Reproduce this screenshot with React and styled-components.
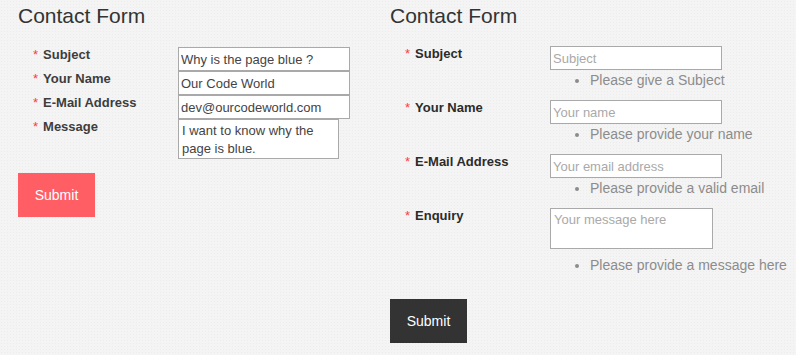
import React from "react";
import styled, { createGlobalStyle } from "styled-components";

const Global = createGlobalStyle`
  html, body { margin: 0; padding: 0; }
  body {
    background-color: #f4f4f4;
    background-image: radial-gradient(#ececec 0.8px, transparent 0.9px);
    background-size: 3px 3px;
    font-family: Arial, "Liberation Sans", sans-serif;
    color: #333;
  }
`;

const Page = styled.div`
  display: flex;
  align-items: flex-start;
  width: 796px;
  height: 355px;
  overflow: hidden;
`;

const Section = styled.section`
  box-sizing: border-box;
  width: ${(p) => p.$width || "auto"};
  flex: ${(p) => (p.$width ? "none" : "1")};
  padding-left: ${(p) => (p.$flush ? 0 : 18)}px;
`;

const Title = styled.h2`
  margin: 4px 0 0;
  font-size: 21px;
  line-height: 24px;
  font-weight: normal;
  color: #333;
`;

const Form = styled.form`
  margin-top: ${(p) => p.$top}px;
  padding-left: 15px;
`;

const Row = styled.div`
  display: grid;
  grid-template-columns: 145px auto;
  align-items: start;
  margin-bottom: ${(p) => p.$gap || 0}px;
`;

const Label = styled.label`
  font-size: 13px;
  line-height: 15px;
  font-weight: bold;
  color: ${(p) => p.$color || "#3d3d3d"};
`;

const Star = styled.span`
  color: #ff3a3a;
  font-weight: normal;
  margin-right: 5px;
`;

const Input = styled.input`
  display: block;
  box-sizing: border-box;
  width: 172px;
  height: 24px;
  margin: 0;
  padding: 0 2px;
  border: 1px solid #a9a9a9;
  background: #fff;
  font-family: Arial, "Liberation Sans", sans-serif;
  font-size: 13px;
  color: #444;
  outline: none;
  &::placeholder { color: #a9a9a9; opacity: 1; }
`;

const TextArea = styled.textarea`
  display: block;
  box-sizing: border-box;
  width: ${(p) => p.$w}px;
  height: ${(p) => p.$h}px;
  margin: 0;
  padding: 2px 3px;
  border: 1px solid #a9a9a9;
  background: #fff;
  font-family: Arial, "Liberation Sans", sans-serif;
  font-size: 13px;
  line-height: 18px;
  color: #444;
  resize: none;
  overflow: hidden;
  outline: none;
  &::placeholder { color: #a9a9a9; opacity: 1; }
`;

const ErrorList = styled.ul`
  margin: ${(p) => p.$top || 2}px 0 0;
  padding: 0 0 0 40px;
  font-size: 14px;
  line-height: 16px;
  color: #8c8c8c;
  white-space: nowrap;
  list-style: disc;
`;

const Button = styled.button`
  display: block;
  box-sizing: border-box;
  width: 77px;
  height: 44px;
  margin-top: ${(p) => p.$top}px;
  padding: 0;
  border: none;
  background: ${(p) => p.$bg};
  color: #fff;
  font-family: Arial, "Liberation Sans", sans-serif;
  font-size: 14px;
  cursor: pointer;
`;

const leftFields = [
  { label: "Subject", value: "Why is the page blue ?" },
  { label: "Your Name", value: "Our Code World" },
  { label: "E-Mail Address", value: "dev@ourcodeworld.com" },
];

const rightFields = [
  { label: "Subject", placeholder: "Subject", error: "Please give a Subject" },
  { label: "Your Name", placeholder: "Your name", error: "Please provide your name" },
  { label: "E-Mail Address", placeholder: "Your email address", error: "Please provide a valid email" },
];

export default function App() {
  return (
    <>
      <Global />
      <Page>
        <Section $width="390px">
          <Title>Contact Form</Title>
          <Form $top={19} onSubmit={(e) => e.preventDefault()}>
            {leftFields.map((f) => (
              <Row key={f.label}>
                <Label><Star>*</Star>{f.label}</Label>
                <Input defaultValue={f.value} spellCheck={false} />
              </Row>
            ))}
            <Row>
              <Label><Star>*</Star>Message</Label>
              <TextArea $w={161} $h={40} spellCheck={false} defaultValue="I want to know why the page is blue." />
            </Row>
          </Form>
          <Button $bg="#ff5e65" $top={14}>Submit</Button>
        </Section>
        <Section $flush>
          <Title>Contact Form</Title>
          <Form $top={18} onSubmit={(e) => e.preventDefault()}>
            {rightFields.map((f) => (
              <Row key={f.label} $gap={12}>
                <Label $color="#2b2b2b"><Star>*</Star>{f.label}</Label>
                <div>
                  <Input placeholder={f.placeholder} />
                  <ErrorList><li>{f.error}</li></ErrorList>
                </div>
              </Row>
            ))}
            <Row>
              <Label $color="#2b2b2b"><Star>*</Star>Enquiry</Label>
              <div>
                <TextArea $w={163} $h={41} placeholder="Your message here" />
                <ErrorList $top={8}><li>Please provide a message here</li></ErrorList>
              </div>
            </Row>
          </Form>
          <Button $bg="#333333" $top={26}>Submit</Button>
        </Section>
      </Page>
    </>
  );
}
